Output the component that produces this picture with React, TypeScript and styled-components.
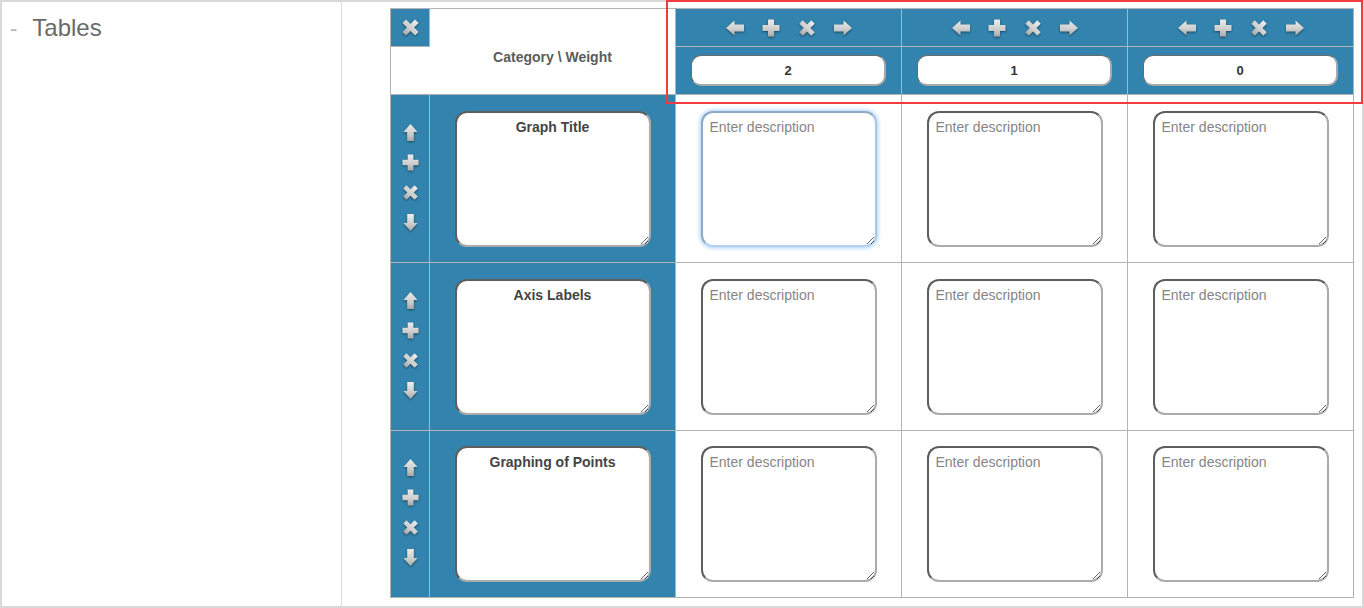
import React, { useId } from "react";
import styled, { createGlobalStyle } from "styled-components";

const GlobalStyle = createGlobalStyle`
  html, body { margin: 0; padding: 0; background: #ffffff; }
  body { font-family: "Liberation Sans", Arial, sans-serif; }
  * { box-sizing: border-box; }
`;

const BLUE = "#3284ae";
const LINE = "#b3b3b3";

const Frame = styled.div`
  position: relative;
  width: 1364px;
  height: 608px;
  border: 2px solid #d9d9d9;
  display: grid;
  grid-template-columns: 340px 1fr;
  background: #fff;
`;

const SidePanel = styled.aside`
  border-right: 1px solid #dcdcdc;
  padding: 13px 0 0 8px;
  display: flex;
  align-items: baseline;
  gap: 15px;
  align-content: start;
  flex-wrap: wrap;
  height: 100%;
`;

const Dash = styled.span`
  font-size: 22px;
  color: #b4b4b4;
  line-height: 26px;
`;

const SideTitle = styled.span`
  font-size: 24px;
  color: #6a6a6a;
  line-height: 26px;
`;

const Main = styled.main`
  padding: 6px 0 0 48px;
`;

const Table = styled.div`
  display: grid;
  grid-template-columns: 38px 245px 225px 225px 225px;
  grid-template-rows: 37px 47px 167px 167px 166px;
  gap: 1px;
  width: 964px;
  background: ${LINE};
  border: 1px solid ${LINE};
`;

const Corner = styled.div`
  grid-column: 1 / 3;
  grid-row: 1 / 3;
  background: #fff;
  display: grid;
  grid-template-columns: 39px 1fr;
  grid-template-rows: 38px 1fr;
`;

const CornerButton = styled.div`
  grid-column: 1;
  grid-row: 1;
  background: ${BLUE};
  border-right: 1px solid ${LINE};
  border-bottom: 1px solid ${LINE};
  display: flex;
  align-items: center;
  justify-content: center;
`;

const CornerLabel = styled.div`
  grid-column: 2;
  grid-row: 1 / 3;
  align-self: center;
  justify-self: center;
  padding-top: 10px;
  font-size: 14px;
  font-weight: bold;
  color: #5c5c5c;
`;

const HeadTools = styled.div<{ $col: number }>`
  grid-column: ${(p) => p.$col};
  grid-row: 1;
  background: ${BLUE};
  display: flex;
  align-items: center;
  justify-content: center;
  gap: 16px;
  padding-left: 1px;
`;

const HeadWeight = styled.div<{ $col: number }>`
  grid-column: ${(p) => p.$col};
  grid-row: 2;
  background: ${BLUE};
  display: flex;
  align-items: center;
  justify-content: center;
`;

const WeightInput = styled.input`
  width: 195px;
  height: 31px;
  border-radius: 10px;
  border-style: solid;
  border-width: 1px 2px 2px 1px;
  border-color: #6a6a6a #a8a8a8 #a8a8a8 #6a6a6a;
  background: #fff;
  text-align: center;
  font-family: "Liberation Sans", Arial, sans-serif;
  font-size: 13px;
  font-weight: bold;
  color: #333;
  outline: none;
  padding: 0;
`;

const RowTools = styled.div`
  background: ${BLUE};
  display: flex;
  flex-direction: column;
  align-items: center;
  justify-content: center;
  gap: 11px;
  padding-bottom: 3px;
`;

const CategoryCell = styled.div`
  background: ${BLUE};
  display: flex;
  align-items: center;
  justify-content: center;
`;

const DescCell = styled.div`
  background: #fff;
  display: flex;
  align-items: center;
  justify-content: center;
`;

const Area = styled.textarea<{ $wide?: boolean; $focused?: boolean }>`
  width: ${(p) => (p.$wide ? "196px" : "176px")};
  height: 136px;
  border-radius: 12px;
  border-style: solid;
  border-width: 2px;
  border-color: ${(p) =>
    p.$focused ? "#8ea9c6 #a9c8e8 #b3d2f2 #8ea9c6" : "#5e5e5e #ababab #ababab #5e5e5e"};
  box-shadow: ${(p) => (p.$focused ? "0 0 4px 1px #a9d0f7" : "none")};
  background: #fff;
  padding: 6px 7px;
  font-family: "Liberation Sans", Arial, sans-serif;
  font-size: 14px;
  line-height: 16px;
  color: #444;
  font-weight: ${(p) => (p.$wide ? "bold" : "normal")};
  text-align: ${(p) => (p.$wide ? "center" : "left")};
  outline: none;
  resize: both;
  &::placeholder {
    color: #858585;
  }
`;

const IconSvg = styled.svg`
  display: block;
  filter: drop-shadow(0 1px 0.8px rgba(0, 0, 0, 0.45));
`;

type IconKind = "left" | "right" | "up" | "down" | "plus" | "x";

const PATHS: Record<IconKind, string> = {
  left: "M1 10 L9.5 2.5 V6.5 H19 V13.5 H9.5 V17.5 Z",
  right: "M19 10 L10.5 2.5 V6.5 H1 V13.5 H10.5 V17.5 Z",
  up: "M10 1 L17.5 9.5 H13.5 V19 H6.5 V9.5 H2.5 Z",
  down: "M10 19 L17.5 10.5 H13.5 V1 H6.5 V10.5 H2.5 Z",
  plus: "M7 1.5 H13 V7 H18.5 V13 H13 V18.5 H7 V13 H1.5 V7 H7 Z",
  x: "M7.6 1.5 H12.4 V7.6 H18.5 V12.4 H12.4 V18.5 H7.6 V12.4 H1.5 V7.6 H7.6 Z",
};

function Icon({ kind, size = 20 }: { kind: IconKind; size?: number }) {
  const id = useId().replace(/:/g, "");
  return (
    <IconSvg width={size} height={size} viewBox="0 0 20 20">
      <defs>
        <linearGradient id={`g${id}`} x1="0" y1="0" x2="0" y2="1">
          <stop offset="0" stopColor="#ececec" />
          <stop offset="0.55" stopColor="#cfcfcf" />
          <stop offset="1" stopColor="#a9a9a9" />
        </linearGradient>
      </defs>
      <path
        d={PATHS[kind]}
        fill={`url(#g${id})`}
        transform={kind === "x" ? "rotate(45 10 10)" : undefined}
      />
    </IconSvg>
  );
}

const Annotation = styled.div`
  position: absolute;
  left: 664px;
  top: -2px;
  width: 697px;
  height: 104px;
  border: 2px solid #f03c3c;
  pointer-events: none;
`;

const weights = ["2", "1", "0"];
const categories = ["Graph Title", "Axis Labels", "Graphing of Points"];

export default function App() {
  return (
    <>
      <GlobalStyle />
      <Frame>
        <SidePanel>
          <Dash>-</Dash>
          <SideTitle>Tables</SideTitle>
        </SidePanel>
        <Main>
          <Table>
            <Corner>
              <CornerButton>
                <Icon kind="x" size={21} />
              </CornerButton>
              <CornerLabel>{"Category \\ Weight"}</CornerLabel>
            </Corner>
            {weights.map((w, i) => (
              <HeadTools key={`t${i}`} $col={i + 3}>
                <Icon kind="left" />
                <Icon kind="plus" />
                <Icon kind="x" />
                <Icon kind="right" />
              </HeadTools>
            ))}
            {weights.map((w, i) => (
              <HeadWeight key={`w${i}`} $col={i + 3}>
                <WeightInput defaultValue={w} />
              </HeadWeight>
            ))}
            {categories.map((c, r) => (
              <React.Fragment key={c}>
                <RowTools>
                  <Icon kind="up" size={19} />
                  <Icon kind="plus" size={19} />
                  <Icon kind="x" size={19} />
                  <Icon kind="down" size={19} />
                </RowTools>
                <CategoryCell>
                  <Area $wide defaultValue={c} />
                </CategoryCell>
                {weights.map((w, i) => (
                  <DescCell key={i}>
                    <Area
                      placeholder="Enter description"
                      $focused={r === 0 && i === 0}
                      autoFocus={r === 0 && i === 0}
                    />
                  </DescCell>
                ))}
              </React.Fragment>
            ))}
          </Table>
        </Main>
        <Annotation />
      </Frame>
    </>
  );
}
